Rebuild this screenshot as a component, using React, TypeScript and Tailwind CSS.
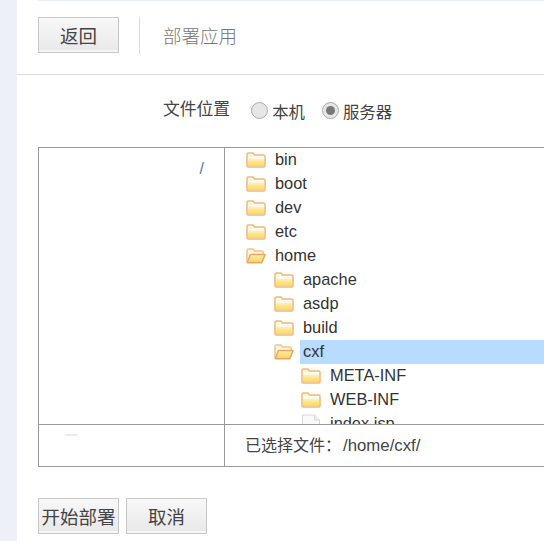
import type { ReactNode } from 'react'

const font = { fontFamily: '"Liberation Sans", "Noto Sans CJK SC", sans-serif' }

function FolderIcon({ open = false }: { open?: boolean }) {
  if (open) {
    return (
      <svg width="20" height="16" viewBox="0 0 20 16" className="shrink-0">
        <defs>
          <linearGradient id="folder-open" x1="0" y1="0" x2="0" y2="1">
            <stop offset="0" stopColor="#fdeeb0" />
            <stop offset="1" stopColor="#f9d452" />
          </linearGradient>
        </defs>
        <path d="M1 14V2.5C1 1.7 1.5 1 2.3 1H7l1.5 2H16c.8 0 1.2.5 1.2 1.2V6" fill="#fdf6e0" stroke="#f0c48a" strokeWidth="1.5" />
        <path d="M1.2 14.8 4.4 6.4h14.8l-3.4 8.4z" fill="url(#folder-open)" stroke="#eba85f" strokeWidth="1.5" strokeLinejoin="round" />
      </svg>
    )
  }
  return (
    <svg width="20" height="16" viewBox="0 0 20 16" className="shrink-0">
      <defs>
        <linearGradient id="folder-closed" x1="0" y1="0" x2="0" y2="1">
          <stop offset="0" stopColor="#fdf0b8" />
          <stop offset="1" stopColor="#f9d759" />
        </linearGradient>
      </defs>
      <path d="M1 14V2.3C1 1.5 1.5 1 2.3 1H7l1.5 2h9c.9 0 1.5.5 1.5 1.3V14c0 .6-.4 1-1 1H2c-.6 0-1-.4-1-1z" fill="#fdf8e4" stroke="#eeb878" strokeWidth="1.5" />
      <path d="M2 7h16v7H2z" fill="url(#folder-closed)" />
      <path d="M2 5.5h6l1-1h9" fill="none" stroke="#fff" strokeWidth="1" />
    </svg>
  )
}

function FileIcon() {
  return (
    <svg width="20" height="20" viewBox="0 0 20 20" className="shrink-0">
      <path d="M1.5 1h12L18.5 6v13h-17z" fill="#fafafa" stroke="#d6d6d6" />
      <path d="M13.5 1v5h5" fill="#eee" stroke="#d6d6d6" />
    </svg>
  )
}

type Node = { name: string; level: 0 | 1 | 2; kind?: 'open' | 'file'; selected?: boolean }

const nodes: Node[] = [
  { name: 'bin', level: 0 },
  { name: 'boot', level: 0 },
  { name: 'dev', level: 0 },
  { name: 'etc', level: 0 },
  { name: 'home', level: 0, kind: 'open' },
  { name: 'apache', level: 1 },
  { name: 'asdp', level: 1 },
  { name: 'build', level: 1 },
  { name: 'cxf', level: 1, kind: 'open', selected: true },
  { name: 'META-INF', level: 2 },
  { name: 'WEB-INF', level: 2 },
  { name: 'index.jsp', level: 2, kind: 'file' },
]

const indent = { 0: 'pl-[21px]', 1: 'pl-[49px]', 2: 'pl-[76px]' }

function TreeRow({ node }: { node: Node }) {
  return (
    <div className={`flex h-6 items-center gap-[9px] ${indent[node.level]}`}>
      {node.kind === 'file' ? <FileIcon /> : <FolderIcon open={node.kind === 'open'} />}
      <span className={node.selected ? '-ml-[3px] flex h-6 flex-1 items-center bg-[#b8dcff] pb-[2px] pl-[3px]' : 'pb-[2px]'}>{node.name}</span>
    </div>
  )
}

function Button({ children }: { children: ReactNode }) {
  return (
    <button className="flex h-9 w-[81px] items-center justify-center border border-[#c8c8c8] bg-gradient-to-b from-[#f8f8f8] to-[#e8e8e8] pt-[3px] text-[18.5px] text-[#444] shadow-[inset_0_-2px_0_#f6f6f6]">
      {children}
    </button>
  )
}

function Radio({ checked = false, label }: { checked?: boolean; label: string }) {
  return (
    <label className="flex items-center gap-[4px]">
      <span className="flex h-[17px] w-[17px] items-center justify-center rounded-full border border-[#aaa] bg-[#e6e6e6]">
        {checked && <span className="h-[9px] w-[9px] rounded-full bg-[#777]" />}
      </span>
      <span className="pt-[2px]">{label}</span>
    </label>
  )
}

export default function App() {
  return (
    <div className="flex h-[541px] w-[544px] overflow-hidden bg-white text-[#444]" style={font}>
      <aside className="w-[17px] shrink-0 bg-[#edf1f7]" />
      <main className="min-w-0 flex-1">
        <div className="ml-[21px] h-px bg-[#e8eef7]" />

        <header className="flex h-[74px] items-start border-b border-[#dcdcdc] pl-[21px] pt-4">
          <Button>返回</Button>
          <div className="ml-5 h-[37px] w-px bg-[#dcdcdc]" />
          <h1 className="ml-[23px] flex h-9 items-center pt-[3px] text-[18.5px] font-light text-[#777]">部署应用</h1>
        </header>

        <div className="flex h-[72px] items-center pl-[146px] text-[16.4px]">
          <span className="mr-[21px] text-[16.8px] -mt-[3px]">文件位置</span>
          <div className="flex gap-[17px]">
            <Radio label="本机" />
            <Radio checked label="服务器" />
          </div>
        </div>

        <section className="ml-[21px] grid h-[320px] w-[520px] grid-cols-[186px_1fr] grid-rows-[276px_1fr] border-y border-l border-[#999]">
          <div className="border-r border-[#999] pr-[20px] pt-[9px] text-right text-[16px] text-[#5a7399]">/</div>
          <div className="overflow-hidden text-[16.4px] text-[#333]">
            {nodes.map((n) => (
              <TreeRow key={n.name} node={n} />
            ))}
          </div>
          <div className="border-r border-t border-[#999] pl-[26px] pt-[9px]">
            <div className="h-[2px] w-[13px] rounded-t-full bg-[#fde6df]" />
          </div>
          <div className="flex items-center border-t border-[#999] pl-[20px] text-[16px]">
            已选择文件：<span className="ml-[2px] text-[16.8px]">/home/cxf/</span>
          </div>
        </section>

        <div className="ml-[21px] mt-[31px] flex gap-[7px]">
          <Button>开始部署</Button>
          <Button>取消</Button>
        </div>
      </main>
    </div>
  )
}
